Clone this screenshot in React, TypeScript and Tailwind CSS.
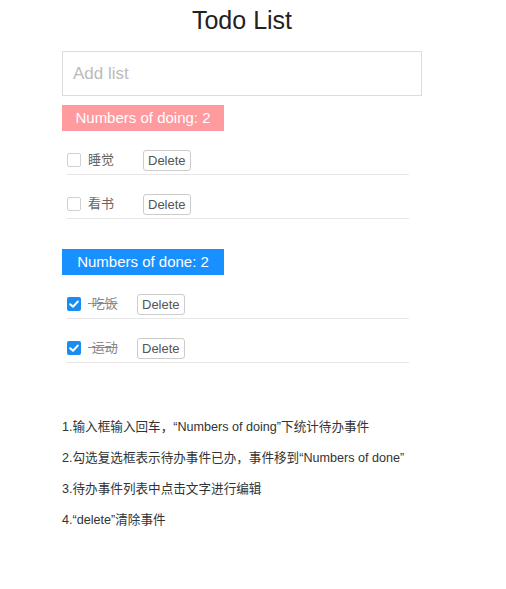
import React, { useState } from 'react';

interface Todo {
  id: number;
  text: string;
  done: boolean;
}

const font = { fontFamily: '"Liberation Sans", "Noto Sans CJK SC", sans-serif' };

function Check({ checked, onClick }: { checked: boolean; onClick: () => void }) {
  return (
    <button
      onClick={onClick}
      className={`w-[14px] h-[14px] rounded-[2px] flex items-center justify-center shrink-0 ${
        checked ? 'bg-[#1a8cf0]' : 'border border-[#d0d0d0] bg-white'
      }`}
    >
      {checked && (
        <svg viewBox="0 0 14 14" className="w-[14px] h-[14px]">
          <path d="M3.2 7.2 L6 9.8 L10.8 4.6" fill="none" stroke="white" strokeWidth="2" strokeLinecap="round" strokeLinejoin="round" />
        </svg>
      )}
    </button>
  );
}

export default function App() {
  const [todos, setTodos] = useState<Todo[]>([
    { id: 1, text: '睡觉', done: false },
    { id: 2, text: '看书', done: false },
    { id: 3, text: '吃饭', done: true },
    { id: 4, text: '运动', done: true },
  ]);
  const [value, setValue] = useState('');

  const doing = todos.filter((t) => !t.done);
  const done = todos.filter((t) => t.done);

  const toggle = (id: number) =>
    setTodos(todos.map((t) => (t.id === id ? { ...t, done: !t.done } : t)));
  const remove = (id: number) => setTodos(todos.filter((t) => t.id !== id));

  const row = (t: Todo) => (
    <li key={t.id} className="pl-[5px] pr-[13px]">
      <div className="h-[44px] pt-[15px] flex items-center border-b border-[#e6e6e6]">
        <Check checked={t.done} onClick={() => toggle(t.id)} />
        {t.done ? (
          <span className="ml-[7px] w-[49px] text-[13px] text-[#888] line-through">&nbsp;{t.text}</span>
        ) : (
          <span className="ml-[7px] w-[55px] text-[13px] text-[#666]">{t.text}</span>
        )}
        <button
          onClick={() => remove(t.id)}
          className="h-[21px] px-[4px] border border-[#ccc] rounded-[3px] text-[13px] text-[#555] leading-none bg-white"
        >
          Delete
        </button>
      </div>
    </li>
  );

  return (
    <div className="min-h-screen bg-white" style={font}>
      <div className="w-[360px] ml-[62px]">
        <h1 className="text-[25px] text-[#222] text-center pt-[4px] leading-[32px]">Todo List</h1>
        <input
          value={value}
          onChange={(e) => setValue(e.target.value)}
          onKeyDown={(e) => {
            if (e.key === 'Enter' && value.trim()) {
              setTodos([...todos, { id: Date.now(), text: value.trim(), done: false }]);
              setValue('');
            }
          }}
          placeholder="Add list"
          className="mt-[15px] w-full h-[45px] border border-[#dcdcdc] px-[10px] text-[17px] text-[#333] placeholder:text-[#bbb] outline-none"
        />
        <div className="mt-[9px] w-[162px] h-[26px] bg-[#ff9a9e] text-white text-[15px] flex items-center justify-center">
          Numbers of doing: {doing.length}
        </div>
        <ul>{doing.map(row)}</ul>
        <div className="mt-[30px] w-[162px] h-[26px] bg-[#1890ff] text-white text-[15px] flex items-center justify-center">
          Numbers of done: {done.length}
        </div>
        <ul>{done.map(row)}</ul>
        <div className="mt-[56px] text-[12.6px] text-[#333] flex flex-col gap-[14px] leading-[17px]">
          <p>1.输入框输入回车，“Numbers of doing”下统计待办事件</p>
          <p>2.勾选复选框表示待办事件已办，事件移到“Numbers of done”</p>
          <p>3.待办事件列表中点击文字进行编辑</p>
          <p>4.“delete”清除事件</p>
        </div>
      </div>
    </div>
  );
}
